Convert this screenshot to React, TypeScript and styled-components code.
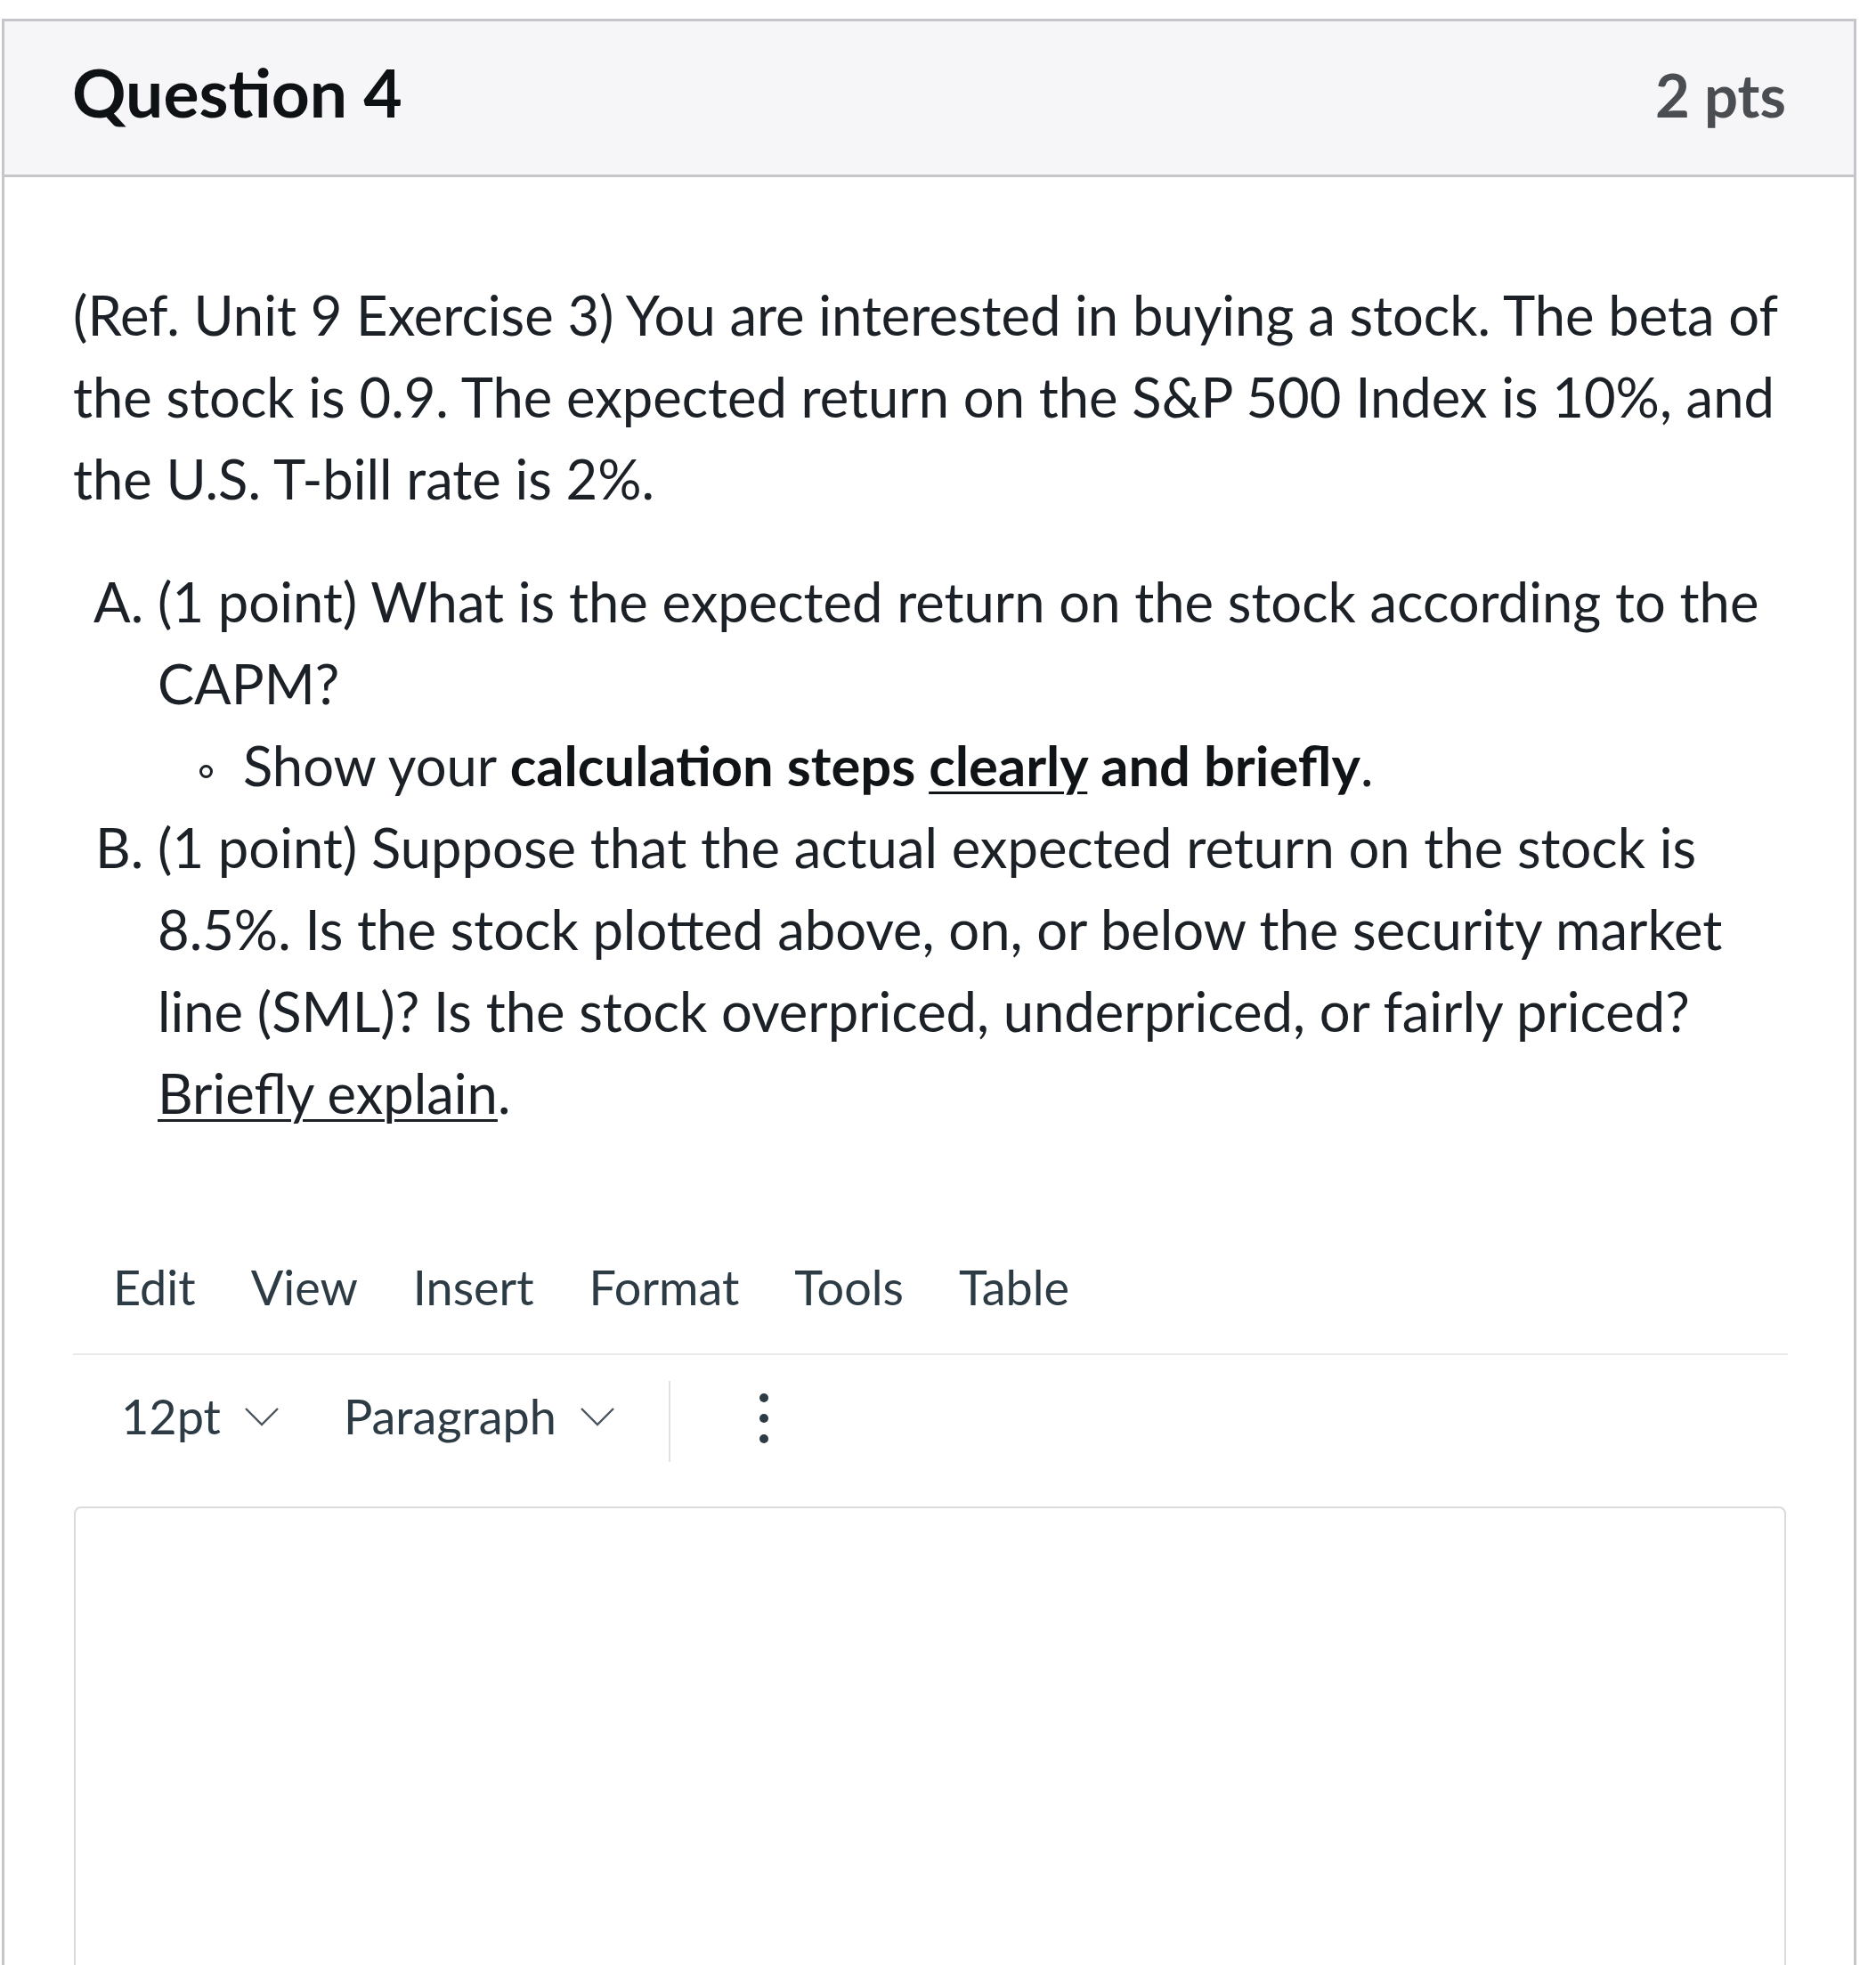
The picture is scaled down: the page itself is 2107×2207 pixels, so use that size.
import { createGlobalStyle, styled } from "styled-components";

const GlobalStyle = createGlobalStyle`
  html, body {
    margin: 0;
    padding: 0;
    overflow: hidden;
    background: #ffffff;
  }
  body {
    font-family: Lato, "Open Sans", "Liberation Sans", sans-serif;
  }
`;

const ChevronDown = () => (
  <Chevron viewBox="0 0 40 24" aria-hidden="true">
    <polyline points="2,3 20,21 38,3" />
  </Chevron>
);

const App = () => {
  return (
    <>
      <GlobalStyle />
      <Card>
        <Header>
          <Title>Question 4</Title>
          <Points>2 pts</Points>
        </Header>
        <Body>
          <Paragraph>
            (Ref. Unit 9 Exercise 3) You are interested in buying a stock. The beta of
            the stock is 0.9. The expected return on the S&amp;P 500 Index is 10%, and
            the U.S. T-bill rate is 2%.
          </Paragraph>
          <PartList>
            <li>
              (1 point) What is the expected return on the stock according to the CAPM?
              <SubList>
                <li>
                  Show your{" "}
                  <strong>
                    calculation steps <u>clearly</u> and briefly
                  </strong>
                  .
                </li>
              </SubList>
            </li>
            <li>
              (1 point) Suppose that the actual expected return on the stock is 8.5%. Is
              the stock plotted above, on, or below the security market line (SML)? Is
              the stock overpriced, underpriced, or fairly priced? <u>Briefly explain</u>.
            </li>
          </PartList>

          <Editor>
            <MenuBar>
              {["Edit", "View", "Insert", "Format", "Tools", "Table"].map((m) => (
                <MenuItem key={m}>{m}</MenuItem>
              ))}
            </MenuBar>
            <ToolBar>
              <ToolButton $gapAfter={72}>
                <span>12pt</span>
                <ChevronDown />
              </ToolButton>
              <ToolButton $gapAfter={60}>
                <span>Paragraph</span>
                <ChevronDown />
              </ToolButton>
              <Divider />
              <KebabButton aria-label="More">
                <Dot />
                <Dot />
                <Dot />
              </KebabButton>
            </ToolBar>
            <EditArea />
          </Editor>
        </Body>
      </Card>
    </>
  );
};

export default App;

const Card = styled.div`
  box-sizing: border-box;
  width: 2083px;
  margin: 21px 0 0 2px;
  border: 3px solid #c4c6c9;
  border-bottom: none;
  background: #ffffff;
`;

const Header = styled.div`
  box-sizing: border-box;
  height: 175px;
  padding: 34px 76px 0 76px;
  display: flex;
  justify-content: space-between;
  align-items: baseline;
  background: #f6f5f7;
  border-bottom: 3px solid #c4c6c9;
`;

const Title = styled.h2`
  margin: 0;
  font-size: 75px;
  line-height: 90px;
  font-weight: 700;
  color: #0f1215;
`;

const Points = styled.div`
  font-size: 67px;
  line-height: 90px;
  font-weight: 700;
  color: #4a4d52;
`;

const Body = styled.div`
  padding: 108px 76px 0 77px;
  color: #1b2126;
  font-size: 61.5px;
  line-height: 92px;
`;

const Paragraph = styled.p`
  margin: 0 0 46px;
`;

const PartList = styled.ol`
  list-style-type: upper-alpha;
  margin: 0;
  padding-left: 95px;

  u {
    text-underline-offset: 6px;
    text-decoration-thickness: 3px;
  }
`;

const SubList = styled.ul`
  list-style: none;
  margin: 0;
  padding-left: 96px;

  li {
    position: relative;
  }

  li::before {
    content: "";
    position: absolute;
    left: -49px;
    top: 46px;
    box-sizing: border-box;
    width: 15px;
    height: 15px;
    border: 3px solid #1b2126;
    border-radius: 50%;
  }

  strong {
    font-weight: 700;
    color: #111417;
  }
`;

const Editor = styled.div`
  margin-top: 141px;
  color: #2d3b45;
`;

const MenuBar = styled.div`
  display: flex;
  gap: 62px;
  padding: 0 0 42px 45px;
  margin-right: -2px;
  border-bottom: 2px solid #e8e9ea;
`;

const MenuItem = styled.span`
  font-size: 54px;
  line-height: 64px;
`;

const ToolBar = styled.div`
  display: flex;
  align-items: flex-start;
  height: 91px;
  margin-top: 29px;
  padding-left: 54px;
`;

const ToolButton = styled.div<{ $gapAfter: number }>`
  display: flex;
  align-items: center;
  gap: 26px;
  margin-top: 8px;
  margin-right: ${(p) => p.$gapAfter}px;
  font-size: 54px;
  line-height: 64px;
`;

const Chevron = styled.svg`
  width: 40px;
  height: 24px;
  fill: none;
  stroke: #4a5560;
  stroke-width: 2.4;
  stroke-linejoin: miter;
`;

const Divider = styled.div`
  align-self: stretch;
  width: 2px;
  background: #dfe1e3;
  margin-right: 100px;
`;

const KebabButton = styled.div`
  display: flex;
  flex-direction: column;
  align-items: center;
  gap: 13px;
  margin-top: 14px;
`;

const Dot = styled.span`
  display: block;
  width: 10px;
  height: 10px;
  border-radius: 50%;
  background: #2d3b45;
`;

const EditArea = styled.div`
  box-sizing: border-box;
  height: 640px;
  margin: 50px 0 0 1px;
  border: 2px solid #d9dbdd;
  border-radius: 8px;
  background: #ffffff;
`;
